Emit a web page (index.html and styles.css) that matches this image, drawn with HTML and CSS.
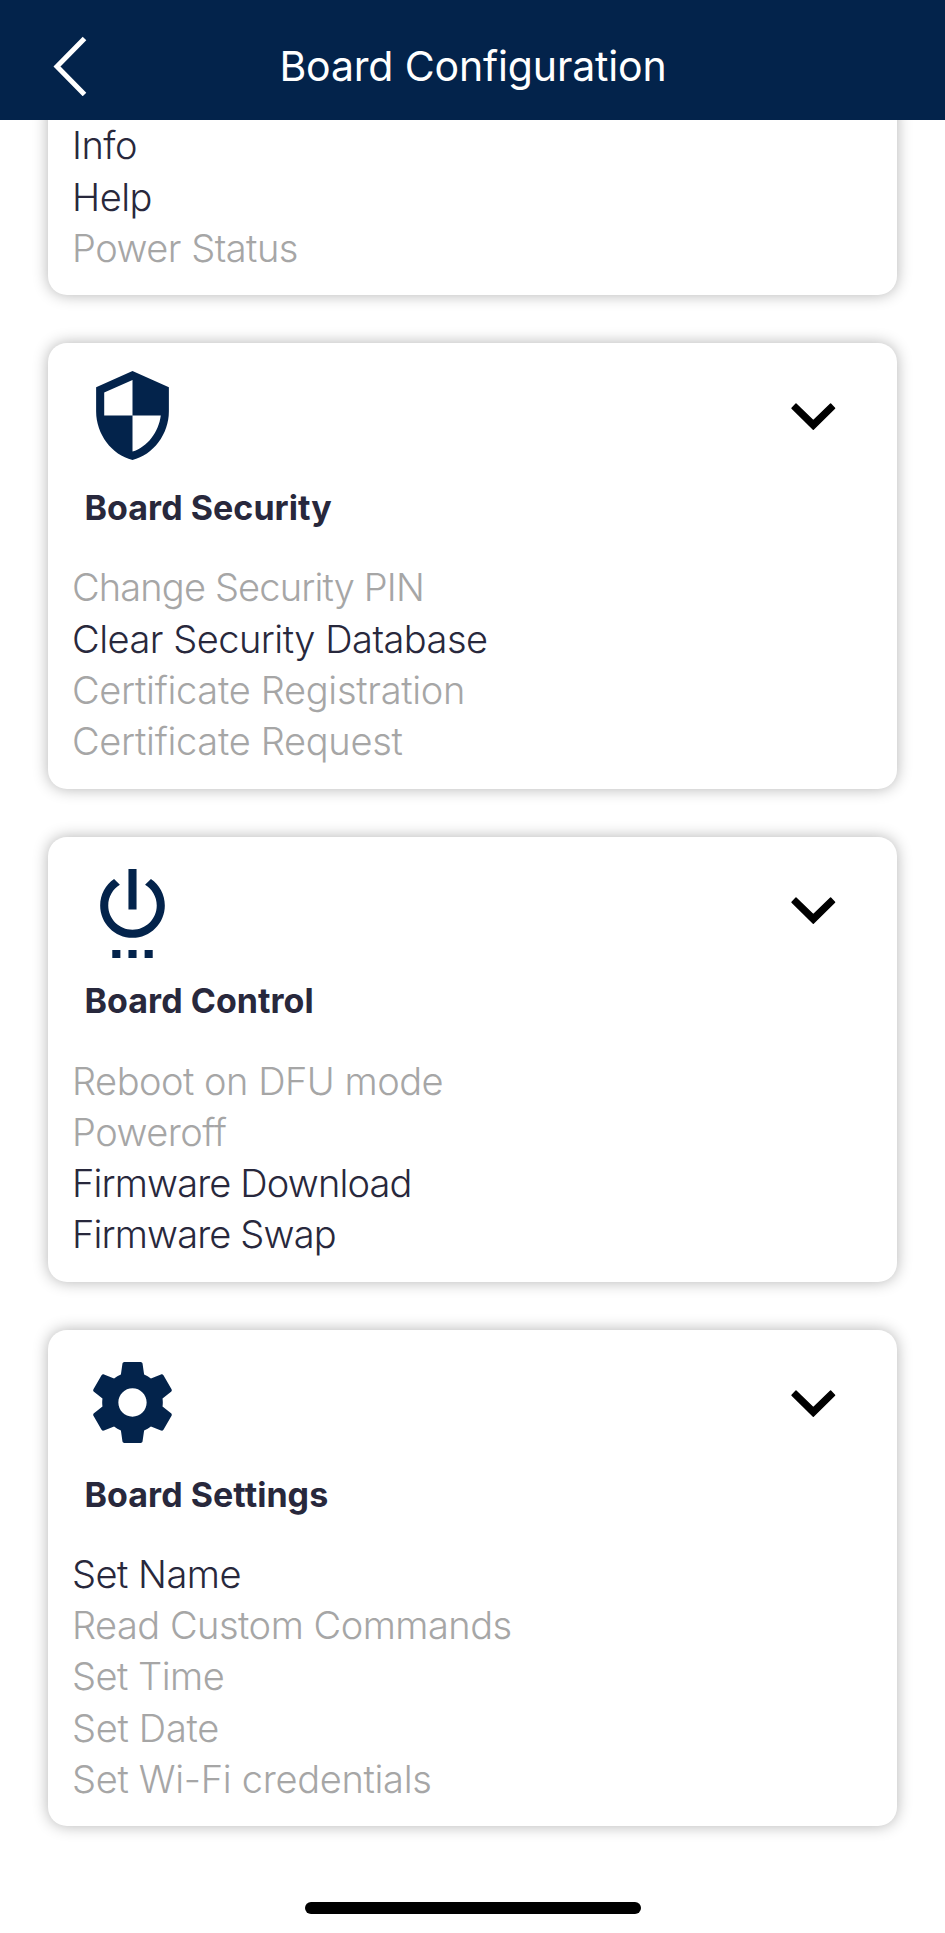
FILE: index.html
```html
<!DOCTYPE html>
<html lang="en">

<head>
    <meta charset="UTF-8">
    <meta name="viewport" content="width=device-width, initial-scale=1.0">
    <title>Board Configuration</title>
    <link rel="stylesheet" href="styles.css">
</head>

<body>
    <div class="layout">
        <header class="header">
            <svg class="back" viewBox="0 0 36 60">
                <path d="M32.5 2.5L5 30.5L32.5 58.5"/>
            </svg>
            <h1>Board Configuration</h1>
        </header>
        <main class="container">
            <!-- scrolled under the header -->
            <section class="card card-first">
                <ul class="list">
                    <li>Info</li>
                    <li>Help</li>
                    <li class="disabled">Power Status</li>
                </ul>
            </section>

            <section class="card">
                <div class="card-top">
                    <svg class="icon" viewBox="0 0 24 24">
                        <path d="M12 1L3 5v6c0 5.55 3.84 10.74 9 12 5.16-1.26 9-6.45 9-12V5l-9-4zm0 10.99h7c-.53 4.12-3.28 7.79-7 8.94V12H5V6.3l7-3.11v8.8z"/>
                    </svg>
                    <svg class="arrow" viewBox="0 0 45 28">
                        <path d="M1 5.2L5 1L22.3 17.8L39.6 1L43.6 5.2L22.3 26.3z"/>
                    </svg>
                </div>
                <h2>Board Security</h2>
                <ul class="list">
                    <li class="disabled tight">Change Security PIN</li>
                    <li>Clear Security Database</li>
                    <li class="disabled loose">Certificate Registration</li>
                    <li class="disabled loose">Certificate Request</li>
                </ul>
            </section>

            <section class="card">
                <div class="card-top">
                    <svg class="icon" viewBox="0 0 24 24">
                        <path d="M7 24h2v-2H7v2zm4 0h2v-2h-2v2zm2-22h-2v10h2V2zm3.56 2.44l-1.45 1.45C16.84 6.94 18 8.83 18 11c0 3.31-2.69 6-6 6s-6-2.69-6-6c0-2.17 1.16-4.06 2.88-5.12L7.44 4.44C5.36 5.88 4 8.28 4 11c0 4.42 3.58 8 8 8s8-3.58 8-8c0-2.72-1.36-5.12-3.44-6.56zM15 24h2v-2h-2v2z"/>
                    </svg>
                    <svg class="arrow" viewBox="0 0 45 28">
                        <path d="M1 5.2L5 1L22.3 17.8L39.6 1L43.6 5.2L22.3 26.3z"/>
                    </svg>
                </div>
                <h2>Board Control</h2>
                <ul class="list">
                    <li class="disabled">Reboot on DFU mode</li>
                    <li class="disabled">Poweroff</li>
                    <li class="tight">Firmware Download</li>
                    <li class="tight">Firmware Swap</li>
                </ul>
            </section>

            <section class="card">
                <div class="card-top">
                    <svg class="icon" viewBox="0 0 24 24">
                        <path d="M19.43 12.98c.04-.32.07-.64.07-.98s-.03-.66-.07-.98l2.11-1.65c.19-.15.24-.42.12-.64l-2-3.46c-.12-.22-.39-.3-.61-.22l-2.49 1c-.52-.4-1.08-.73-1.69-.98l-.38-2.65C14.46 2.18 14.25 2 14 2h-4c-.25 0-.46.18-.49.42l-.38 2.65c-.61.25-1.17.59-1.69.98l-2.49-1c-.23-.09-.49 0-.61.22l-2 3.46c-.13.22-.07.49.12.64l2.11 1.65c-.04.32-.07.65-.07.98s.03.66.07.98l-2.11 1.65c-.19.15-.24.42-.12.64l2 3.46c.12.22.39.3.61.22l2.49-1c.52.4 1.08.73 1.69.98l.38 2.65c.03.24.24.42.49.42h4c.25 0 .46-.18.49-.42l.38-2.65c.61-.25 1.17-.59 1.69-.98l2.49 1c.23.09.49 0 .61-.22l2-3.46c.12-.22.07-.49-.12-.64l-2.11-1.65zM12 15.5c-1.93 0-3.5-1.57-3.5-3.5s1.57-3.5 3.5-3.5 3.5 1.57 3.5 3.5-1.57 3.5-3.5 3.5z"/>
                    </svg>
                    <svg class="arrow" viewBox="0 0 45 28">
                        <path d="M1 5.2L5 1L22.3 17.8L39.6 1L43.6 5.2L22.3 26.3z"/>
                    </svg>
                </div>
                <h2>Board Settings</h2>
                <ul class="list">
                    <li>Set Name</li>
                    <li class="disabled">Read Custom Commands</li>
                    <li class="disabled">Set Time</li>
                    <li class="disabled loose">Set Date</li>
                    <li class="disabled loose">Set Wi-Fi credentials</li>
                </ul>
            </section>
        </main>
        <div class="home-bar"></div>
    </div>
</body>

</html>
```

FILE: styles.css
```css
* {
    box-sizing: border-box;
}
body {
    margin: 0;
    background-color: #fff;
    font-family: Inter, "Liberation Sans", sans-serif;
    color: #28283c;
}
h1, h2, ul {
    margin: 0;
    padding: 0;
}
ul {
    list-style: none;
}
svg {
    display: block;
}
.layout {
    display: flex;
    flex-direction: column;
    height: 1933px;
    overflow: hidden;
}

.header {
    position: relative;
    z-index: 1;
    display: grid;
    grid-template-columns: 92px 1fr 92px;
    flex: none;
    height: 119.5px;
    padding-top: 36px;
    background-color: #03234b;
}
.header h1 {
    padding: 5px 0 0 1px;
    font-size: 41px;
    font-weight: 400;
    line-height: 50px;
    letter-spacing: -0.15px;
    text-align: center;
    white-space: nowrap;
    color: #fff;
}
.back {
    width: 36px;
    height: 60px;
    margin-left: 52px;
    fill: none;
    stroke: #fff;
    stroke-width: 5;
}

.container {
    display: flex;
    flex-direction: column;
    gap: 48px;
    padding: 0 48px;
}
.card {
    padding: 24px 24px 21.2px;
    border-radius: 19px;
    background-color: #fff;
    box-shadow: 0 0 15px rgba(0, 0, 0, 0.3);
}
.card-first {
    margin-top: -23.2px;
}
.card-top {
    display: flex;
    justify-content: space-between;
    padding: 0 37px 0 12px;
}
.icon {
    width: 97px;
    height: 97px;
    fill: #03234b;
}
.arrow {
    width: 45px;
    height: 28px;
    margin-top: 36px;
    fill: #000;
    stroke: #000;
    stroke-width: 1.4;
    stroke-linejoin: round;
}
.card h2 {
    margin: 23.6px 0 34.3px;
    padding-left: 12.5px;
    font-size: 34px;
    font-weight: 700;
    line-height: 40px;
    letter-spacing: 0.05px;
}
.list li {
    font-size: 38px;
    font-weight: 300;
    line-height: 51.3px;
    letter-spacing: -0.5px;
}
.list .disabled {
    color: #a6a6a6;
}
.list .loose {
    letter-spacing: -0.3px;
}
.list .tight {
    letter-spacing: -0.85px;
}

.home-bar {
    flex: none;
    width: 336px;
    height: 12.5px;
    margin: auto auto 19px 305px;
    border-radius: 7px;
    background-color: #000;
}
```
